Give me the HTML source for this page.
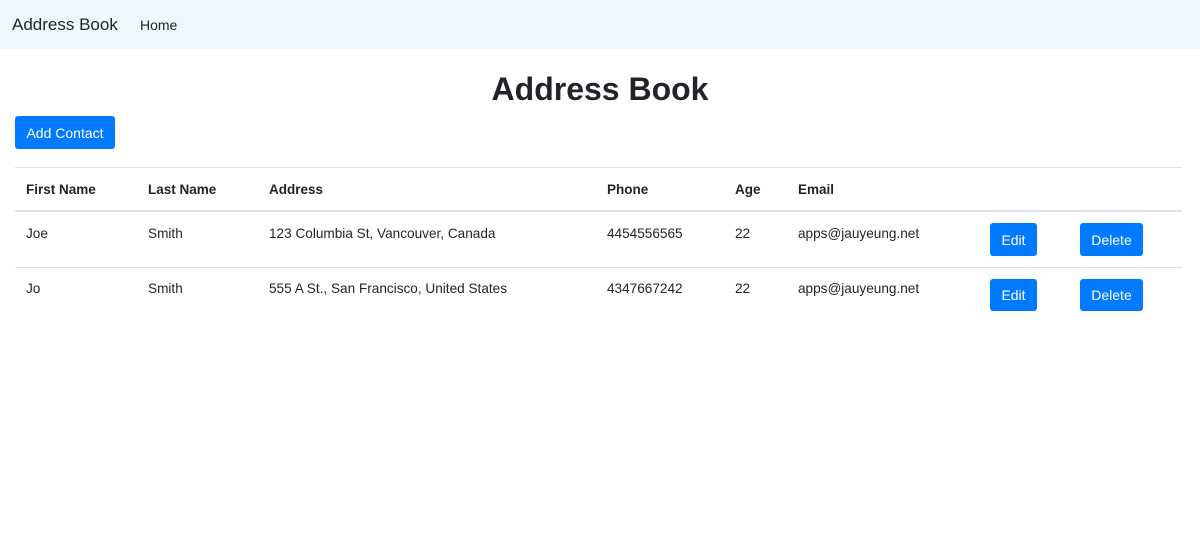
<!DOCTYPE html>
<html><head><style>
body{margin:0;width:1200px;height:550px;background:#fff;font-family:"Liberation Sans",sans-serif;color:#212529;position:relative;overflow:hidden}
.a{position:absolute;white-space:nowrap}
.nav{position:absolute;left:0;top:0;width:1200px;height:49px;background:#eff6fe}
.btn{position:absolute;background:#007bff;color:#fff;border-radius:3px;font-size:14px;display:flex;align-items:center;justify-content:center}
.th{font-weight:bold;font-size:13.5px}
.td{font-size:13.6px}
.line{position:absolute;left:15px;width:1167px;background:#dee2e6}
</style></head><body>
<div class="nav"></div>
<div class="a" style="left:12px;top:15px;font-size:17px">Address Book</div>
<div class="a" style="left:140px;top:17px;font-size:14px">Home</div>
<div class="a" style="left:0;width:1200px;text-align:center;top:71px;font-size:32px;font-weight:bold">Address Book</div>
<div class="btn" style="left:15px;top:116px;width:100px;height:33px">Add Contact</div>
<div class="line" style="top:167px;height:1px"></div>
<div class="line" style="top:210px;height:2px"></div>
<div class="line" style="top:267px;height:1px"></div>
<div class="a th" style="left:26px;top:182px">First Name</div>
<div class="a th" style="left:148px;top:182px">Last Name</div>
<div class="a th" style="left:269px;top:182px">Address</div>
<div class="a th" style="left:607px;top:182px">Phone</div>
<div class="a th" style="left:735px;top:182px">Age</div>
<div class="a th" style="left:798px;top:182px">Email</div>
<div class="a td" style="left:26px;top:226px">Joe</div>
<div class="a td" style="left:148px;top:226px">Smith</div>
<div class="a td" style="left:269px;top:226px">123 Columbia St, Vancouver, Canada</div>
<div class="a td" style="left:607px;top:226px">4454556565</div>
<div class="a td" style="left:735px;top:226px">22</div>
<div class="a td" style="left:798px;top:226px">apps@jauyeung.net</div>
<div class="btn" style="left:990px;top:223px;width:47px;height:33px">Edit</div>
<div class="btn" style="left:1080px;top:223px;width:63px;height:33px">Delete</div>
<div class="a td" style="left:26px;top:281px">Jo</div>
<div class="a td" style="left:148px;top:281px">Smith</div>
<div class="a td" style="left:269px;top:281px">555 A St., San Francisco, United States</div>
<div class="a td" style="left:607px;top:281px">4347667242</div>
<div class="a td" style="left:735px;top:281px">22</div>
<div class="a td" style="left:798px;top:281px">apps@jauyeung.net</div>
<div class="btn" style="left:990px;top:279px;width:47px;height:32px">Edit</div>
<div class="btn" style="left:1080px;top:279px;width:63px;height:32px">Delete</div>
</body></html>
